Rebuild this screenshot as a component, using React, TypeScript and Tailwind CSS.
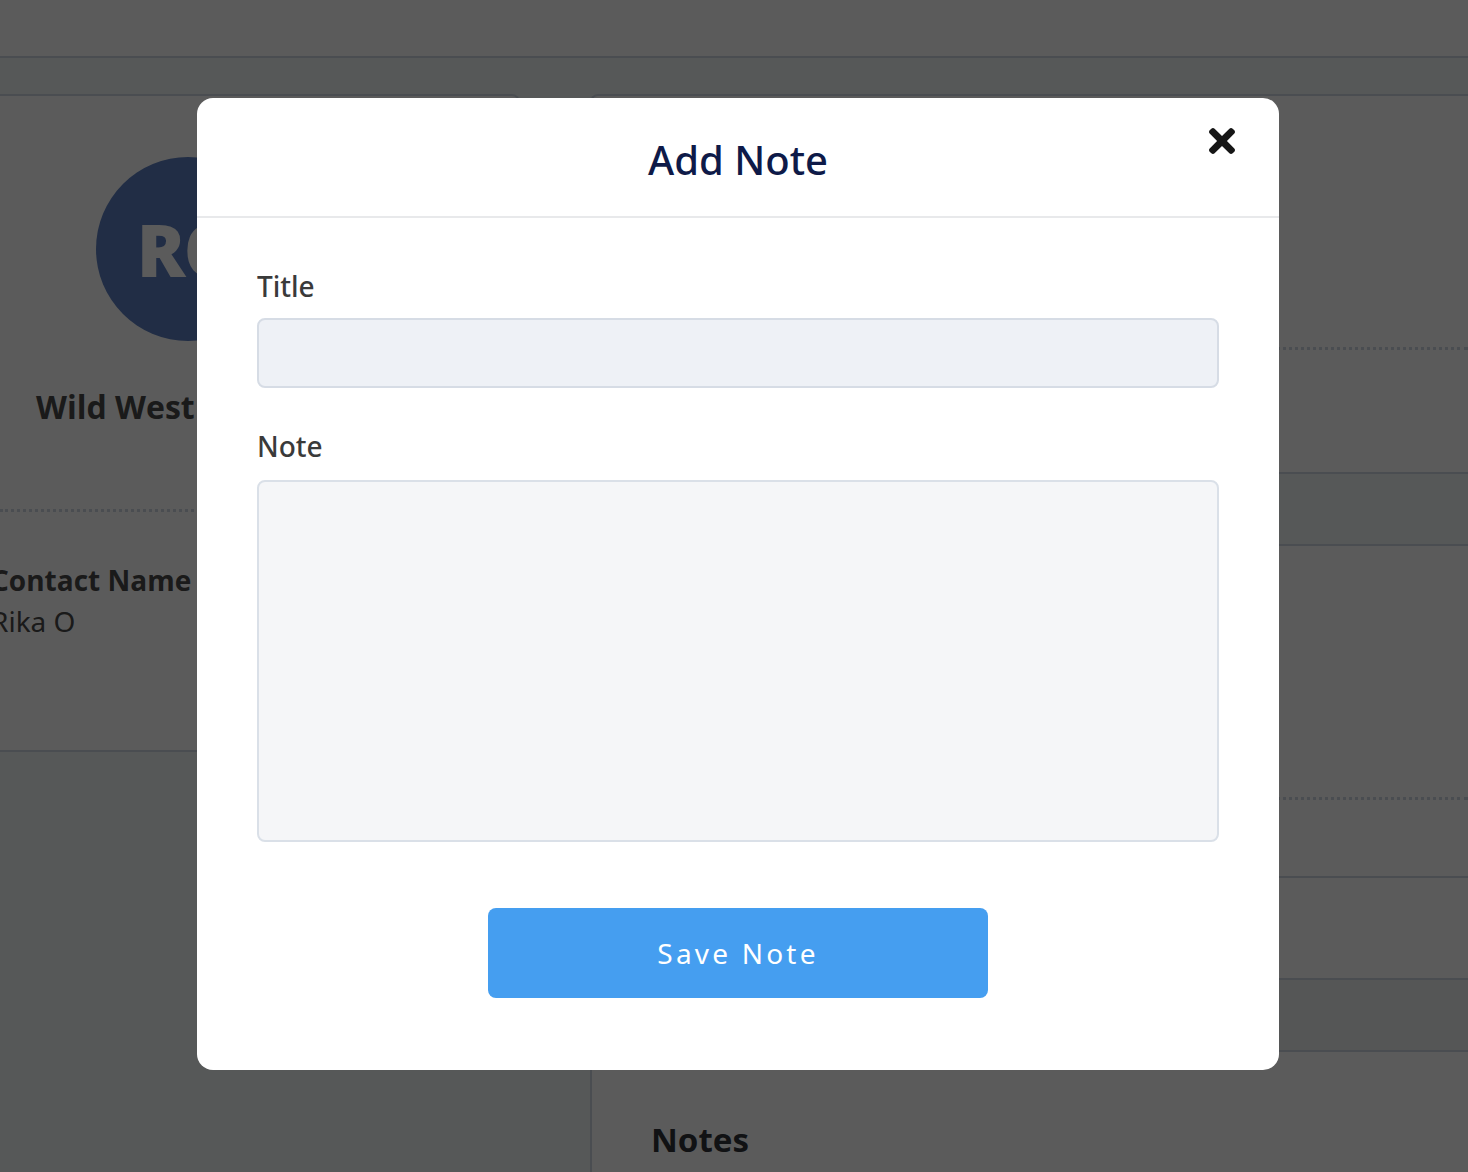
import { useState } from 'react';

const openSans = { fontFamily: '"Open Sans", "Noto Sans", sans-serif' };
const notoSans = { fontFamily: '"Noto Sans", "Open Sans", sans-serif' };
const geo = { fontFamily: '"Noto Sans", "Open Sans", sans-serif' };

function CloseIcon() {
  return (
    <svg viewBox="0 80 352 352" className="w-[26px] h-[26px]" fill="#161616">
      <path d="M242.72 256l100.07-100.07c12.28-12.28 12.28-32.19 0-44.48l-22.24-22.24c-12.28-12.28-32.19-12.28-44.48 0L176 189.28 75.93 89.21c-12.28-12.28-32.19-12.28-44.48 0L9.21 111.45c-12.28 12.28-12.28 32.19 0 44.48L109.28 256 9.21 356.07c-12.28 12.28-12.28 32.19 0 44.48l22.24 22.240c12.28 12.28 32.2 12.28 44.48 0L176 322.72l100.07 100.07c12.28 12.28 32.2 12.28 44.48 0l22.24-22.24c12.28-12.28 12.28-32.19 0-44.48L242.72 256z" />
    </svg>
  );
}

// the page that sits behind the dimmed overlay
function ContactPage() {
  return (
    <div className="w-full h-full bg-[#f2f7f5]" style={openSans}>
      <div className="h-[58px] bg-white border-b-2 border-[#d0d9e4]" />
      <div className="flex gap-[70px] pt-[36px] h-[1114px]">
        {/* left card */}
        <div className="w-[520px] shrink-0 self-start h-[658px] bg-white border-t-2 border-r-2 border-b-2 border-[#d0d9e4] rounded-tr-lg overflow-hidden">
          <div className="pt-[61px] pl-[96px]">
            <div className="w-[184px] h-[184px] rounded-full bg-[#5d7fc0] flex items-center justify-center">
              <span className="text-white text-[72px] font-extrabold tracking-tight">RO</span>
            </div>
          </div>
          <div className="pl-[36px] mt-[45px] text-[32px] leading-[42px] font-bold text-[#4a4a4a]">Wild West Supply</div>
          <div className="mt-[81px] mr-[30px] border-t-[3px] border-dotted border-[#d0d9e4]" />
          <div className="ml-[-9px] mt-[50px] text-[28px] leading-[36px] font-bold text-[#4a4a4a]">Contact Name</div>
          <div className="ml-[-9px] mt-[5px] text-[28px] leading-[36px] text-[#4a4a4a]" style={geo}>Rika O</div>
        </div>

        {/* right card */}
        <div className="flex-1 bg-white border-t-2 border-l-2 border-[#d0d9e4] rounded-tl-lg">
          <div className="h-[251px]" />
          <div className="ml-[60px] border-t-[3px] border-dotted border-[#d0d9e4]" />
          <div className="h-[122px]" />
          <div className="h-[74px] bg-[#f2f7f5] border-y-2 border-[#d0d9e4]" />
          <div className="h-[251px]" />
          <div className="ml-[60px] border-t-[3px] border-dotted border-[#d0d9e4]" />
          <div className="h-[76px]" />
          <div className="h-[102px] border-t-2 border-[#d0d9e4]" />
          <div className="h-[74px] bg-[#eef2f1] border-y-2 border-[#d0d9e4]" />
          <div className="pl-[59px] pt-[63px] text-[33px] font-bold text-[#323438]" style={geo}>Notes</div>
        </div>
      </div>
    </div>
  );
}

function AddNoteModal() {
  const [title, setTitle] = useState('');
  const [note, setNote] = useState('');

  return (
    <div className="absolute left-[197px] top-[98px] w-[1082px] bg-white rounded-2xl" style={openSans}>
      {/* Header */}
      <div className="relative h-[120px] border-b-2 border-[#e8e9eb] flex items-center justify-center">
        <h2 className="text-[40px] leading-none font-medium text-[#0e1a48] pt-[6px]" style={notoSans}>Add Note</h2>
        <button type="button" className="absolute right-[44px] top-[30px]">
          <CloseIcon />
        </button>
      </div>

      {/* Body */}
      <form className="px-[60px] pt-[50px] pb-[72px]" onSubmit={e => e.preventDefault()}>
        <label className="block text-[28px] leading-[36px] font-medium text-[#3a3a3a] mb-[14px]" style={notoSans}>Title</label>
        <input
          value={title}
          onChange={e => setTitle(e.target.value)}
          className="block w-full h-[70px] bg-[#eef1f6] border-2 border-[#d6dce5] rounded-lg px-4 text-[22px] outline-none"
        />

        <label className="block mt-[40px] text-[28px] leading-[36px] font-medium text-[#3a3a3a] mb-[16px]" style={notoSans}>Note</label>
        <textarea
          value={note}
          onChange={e => setNote(e.target.value)}
          className="block w-full h-[362px] bg-[#f5f6f8] border-2 border-[#dae0e8] rounded-lg px-4 py-3 text-[22px] outline-none resize-none"
        />

        <div className="flex justify-center mt-[66px]">
          <button
            type="submit"
            className="w-[500px] h-[90px] bg-[#459ef0] rounded-lg text-white text-[28px] tracking-[3.2px]"
            style={geo}
          >
            Save Note
          </button>
        </div>
      </form>
    </div>
  );
}

export default function App() {
  return (
    <div className="relative w-full h-[1172px] overflow-hidden">
      <ContactPage />
      <div className="absolute inset-0 bg-[rgba(0,0,0,0.643)]" />
      <AddNoteModal />
    </div>
  );
}
